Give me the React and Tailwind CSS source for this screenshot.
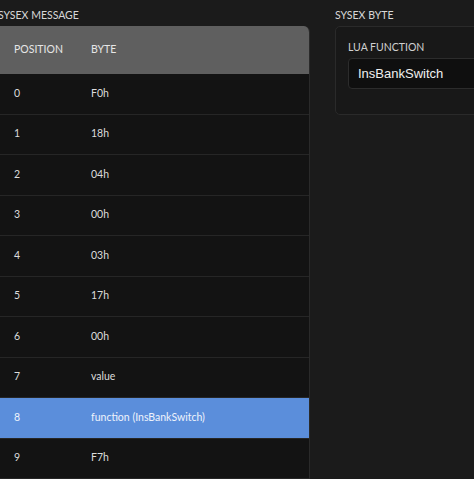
const rows = [
  ["0", "F0h"],
  ["1", "18h"],
  ["2", "04h"],
  ["3", "00h"],
  ["4", "03h"],
  ["5", "17h"],
  ["6", "00h"],
  ["7", "value"],
  ["8", "function (InsBankSwitch)"],
  ["9", "F7h"],
];

export default function App() {
  return (
    <div className="h-[479px] w-[474px] overflow-hidden bg-[#1b1b1b] font-['Lato','Noto_Sans',sans-serif] text-[#dcdcdc]">
      <div className="flex w-[600px] gap-[25px]">
        {/* sysex message table */}
        <div className="-ml-[2px] w-[312px] shrink-0">
          <p className="h-[26px] pt-[8px] text-[10.5px] leading-[14px] text-[#d8d8d8]">SYSEX MESSAGE</p>
          <div className="overflow-hidden rounded-tr-[6px] border-r border-[#2a2a2a] bg-[#131313]">
            <div className="flex h-[48px] items-center bg-[#5f5f5f] text-[10.5px] text-[#e6e6e6]">
              <span className="w-[93px] pl-[16px]">POSITION</span>
              <span>BYTE</span>
            </div>
            {rows.map(([pos, byte]) => {
              const active = pos === "8";
              return (
                <div
                  key={pos}
                  className={
                    active
                      ? "flex h-[40.5px] items-center border-b border-[#262626] bg-[#5b8edb] text-[10.5px] text-[#eef3fb]"
                      : "flex h-[40.5px] items-center border-b border-[#262626] text-[10.5px] text-[#dcdcdc]"
                  }
                >
                  <span className="w-[93px] pl-[16px]">{pos}</span>
                  <span>{byte}</span>
                </div>
              );
            })}
          </div>
        </div>

        {/* sysex byte panel */}
        <div className="w-[200px] shrink-0">
          <p className="h-[26px] pt-[8px] text-[10.5px] leading-[14px] text-[#d8d8d8]">SYSEX BYTE</p>
          <div className="h-[89px] rounded-[5px] border border-[#2a2a2a] bg-[#181818] pl-[12px] pt-[13px]">
            <p className="text-[10.5px] leading-[14px] text-[#d0d0d0]">LUA FUNCTION</p>
            <div className="mt-[4px] flex h-[31px] items-center rounded-[4px] border border-[#2c2c2c] bg-[#0f0f0f] pl-[9px] font-['Liberation_Sans',Arial,sans-serif] text-[13px] text-[#efefef]">
              InsBankSwitch
            </div>
          </div>
        </div>
      </div>
    </div>
  );
}
